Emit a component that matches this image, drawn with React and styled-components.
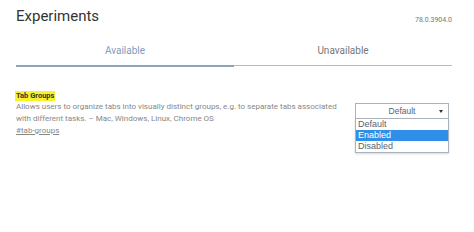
import React from "react";
import styled, { createGlobalStyle } from "styled-components";

const Global = createGlobalStyle`
  html, body { margin: 0; padding: 0; background: #fff; }
  body { font-family: Roboto, "Noto Sans", Arial, sans-serif; }
`;

const Page = styled.div`
  width: 474px;
  height: 232px;
  box-sizing: border-box;
  padding: 0 22px 0 16px;
  background: #fff;
`;

const Header = styled.div`
  display: flex;
  justify-content: space-between;
  align-items: flex-end;
  height: 27px;
`;

const Title = styled.h1`
  margin: 0;
  font-size: 15px;
  font-weight: 400;
  color: #333;
  line-height: 18px;
  padding-bottom: 2px;
`;

const Version = styled.span`
  font-size: 7px;
  color: #777;
  line-height: 9px;
  padding-bottom: 2px;
`;

const Tabs = styled.div`
  display: flex;
  margin-top: 18px;
`;

const Tab = styled.div`
  flex: 1;
  text-align: center;
  font-size: 10px;
  line-height: 12px;
  padding-bottom: 8px;
  color: ${(p) => (p.$active ? "#7f9bbd" : "#777")};
  border-bottom: ${(p) => (p.$active ? "2px solid #8ea5b7" : "1px solid #bbb")};
  margin-bottom: ${(p) => (p.$active ? "0" : "1px")};
`;

const Experiment = styled.div`
  display: flex;
  justify-content: space-between;
  margin-top: 24px;
`;

const Info = styled.div`
  display: flex;
  flex-direction: column;
  align-items: flex-start;
`;

const Name = styled.span`
  background: #f7f32a;
  color: #333;
  font-weight: 700;
  font-size: 7.5px;
  line-height: 10px;
  padding: 0 1px;
  margin-left: -1px;
`;

const Desc = styled.p`
  margin: 0;
  font-size: 8px;
  line-height: 12px;
  color: #888;
  white-space: nowrap;
`;

const Link = styled.a`
  font-size: 8px;
  line-height: 11px;
  color: #888;
  text-decoration: underline;
`;

const SelectWrap = styled.div`
  width: 94px;
  margin-top: 12px;
  margin-right: 3px;
  font-family: "Liberation Sans", Arial, sans-serif;
`;

const SelectBox = styled.div`
  position: relative;
  height: 16px;
  box-sizing: border-box;
  border: 1px solid #a9b3bd;
  display: flex;
  align-items: center;
  justify-content: center;
  font-size: 8.5px;
  color: #5a6470;
`;

const Arrow = styled.span`
  position: absolute;
  right: 5px;
  top: 6px;
  width: 0;
  height: 0;
  border-left: 2px solid transparent;
  border-right: 2px solid transparent;
  border-top: 3px solid #333;
`;

const List = styled.div`
  border: 1px solid #a9b3bd;
  border-top: none;
  box-shadow: 0 1px 2px rgba(0,0,0,0.15);
  display: flex;
  flex-direction: column;
`;

const Option = styled.div`
  font-size: 9px;
  line-height: 11px;
  padding-left: 2px;
  background: ${(p) => (p.$selected ? "#2f8fe8" : "#fff")};
  color: ${(p) => (p.$selected ? "#fff" : "#5a6470")};
`;

export default function App() {
  return (
    <Page>
      <Global />
      <Header>
        <Title>Experiments</Title>
        <Version>78.0.3904.0</Version>
      </Header>
      <Tabs>
        <Tab $active>Available</Tab>
        <Tab>Unavailable</Tab>
      </Tabs>
      <Experiment>
        <Info>
          <Name>Tab Groups</Name>
          <Desc>
            Allows users to organize tabs into visually distinct groups, e.g. to separate tabs associated
            <br />
            with different tasks. – Mac, Windows, Linux, Chrome OS
          </Desc>
          <Link>#tab-groups</Link>
        </Info>
        <SelectWrap>
          <SelectBox>
            Default
            <Arrow />
          </SelectBox>
          <List>
            <Option>Default</Option>
            <Option $selected>Enabled</Option>
            <Option>Disabled</Option>
          </List>
        </SelectWrap>
      </Experiment>
    </Page>
  );
}
